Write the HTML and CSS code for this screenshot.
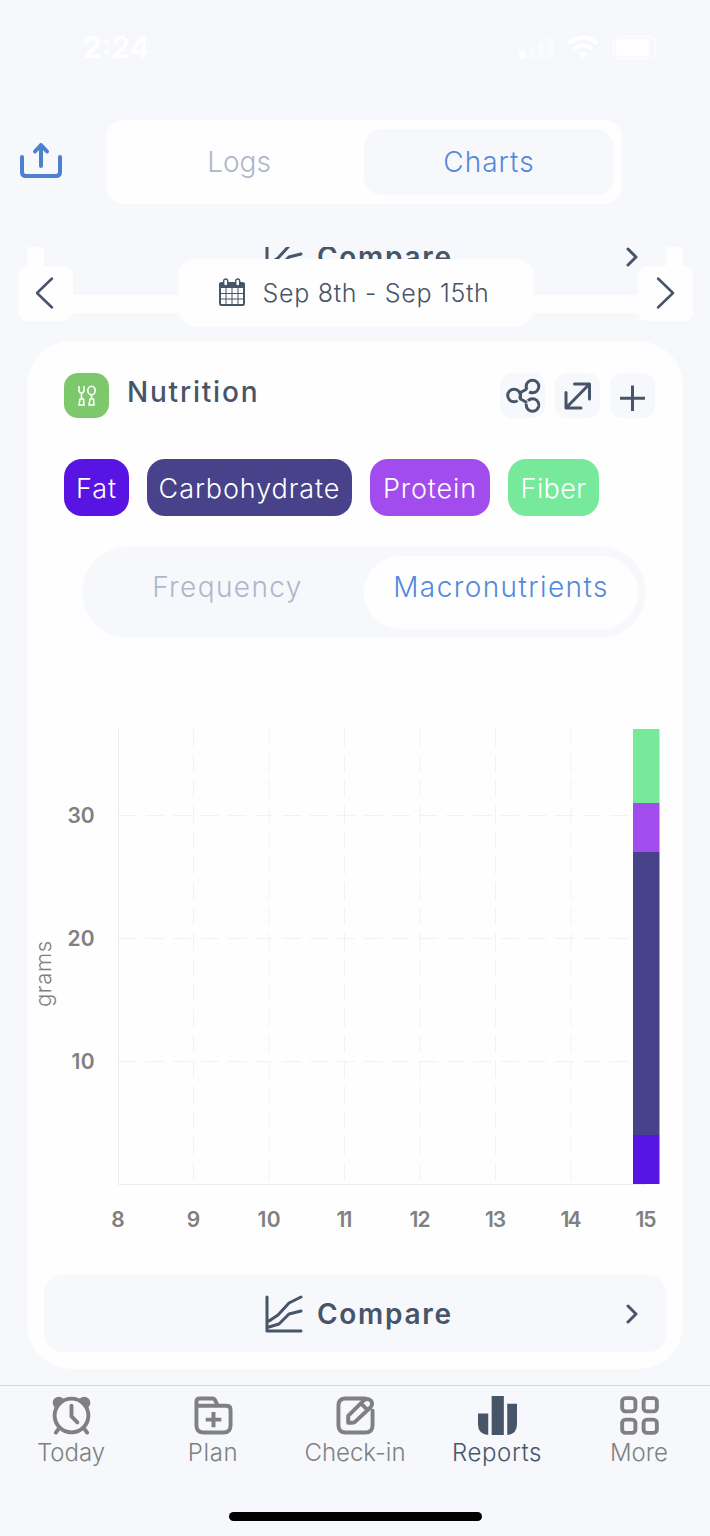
FILE: index.html
```html
<!DOCTYPE html>
<html lang="en">
  <head>
    <meta charset="UTF-8" />
    <meta name="viewport" content="width=device-width, initial-scale=1.0" />
    <title>Reports</title>
    <link rel="stylesheet" href="styles.css">
  </head>

  <body>
    <div class="status-bar">
      <span class="time">2:24</span>
      <svg class="status-icons" width="144" height="26" viewBox="0 0 144 26">
        <rect x="1" y="17" width="6" height="8" rx="2" fill="#fff" />
        <g fill="#fafbfe">
          <rect x="11" y="13" width="6" height="12" rx="2" />
          <rect x="20" y="8" width="6" height="17" rx="2" />
          <rect x="30" y="3" width="6" height="22" rx="2" />
        </g>
        <g fill="none" stroke="#fff" stroke-width="4">
          <path d="M51 9.500Q65 -2.500 79 9.500" />
          <path d="M56 15Q65 7.500 74 15" />
        </g>
        <path d="M60.500 19.500Q65 16 69.500 19.500L65 24.500Z" fill="#fff" />
        <rect x="95.500" y="2.500" width="42" height="22" rx="7" fill="none" stroke="#fbfcfe" stroke-width="2" />
        <rect x="98" y="5" width="33" height="17" rx="4" fill="#fff" />
        <path d="M140 9.500q3 4 0 8z" fill="#fbfcfe" />
      </svg>
    </div>

    <div class="top-bar">
      <svg class="share" width="44" height="38" viewBox="0 0 44 38">
        <path d="M3 16V31Q3 35 7 35H37Q41 35 41 31V16M22 25V4M16 10.500L22 4L28 10.500" />
      </svg>
      <div class="switch">
        <div class="option logs">Logs</div>
        <div class="option charts active">Charts</div>
      </div>
    </div>

    <div class="content">
      <!-- end of the previous card -->
      <div class="card previous">
        <div class="compare">
          <svg width="38" height="38" viewBox="0 0 38 38">
            <path d="M2 2V36H36M4 26L13 20L24 8L36 2M4 32L14 29L24 19L36 16" />
          </svg>
          <span>Compare</span>
          <svg class="chevron" width="14" height="20" viewBox="0 0 14 20">
            <path d="M3 2L11 10L3 18" />
          </svg>
        </div>
      </div>

      <!-- date picker floats over the cards -->
      <div class="date-nav">
        <div class="arrow back">
          <svg width="20" height="34" viewBox="0 0 20 34">
            <path d="M18 2.500L3 17L18 31.500" />
          </svg>
        </div>
        <div class="range">
          <svg width="28" height="30" viewBox="0 0 28 30">
            <rect x="2" y="5" width="24" height="22" rx="1.500" fill="none" stroke="#475569" stroke-width="2" />
            <path d="M1 5H27V10H1Z" fill="#475569" />
            <path d="M8 10V27M14 10V27M20 10V27M2 15.500H26M2 21H26" stroke="#475569" stroke-width="1" />
            <rect x="5.700" y="1" width="4" height="7" rx="2" fill="#fefefe" stroke="#475569" stroke-width="1.400" />
            <rect x="17.700" y="1" width="4" height="7" rx="2" fill="#fefefe" stroke="#475569" stroke-width="1.400" />
          </svg>
          <span>Sep 8th - Sep 15th</span>
        </div>
        <div class="arrow">
          <svg width="20" height="34" viewBox="0 0 20 34">
            <path d="M2 2.500L17 17L2 31.500" />
          </svg>
        </div>
      </div>

      <div class="card nutrition">
        <div class="card-header">
          <div class="badge">
            <svg width="18" height="22" viewBox="0 0 18 22">
              <path d="M1 1V5Q1 8 3.500 8Q6 8 6 5V1M3.500 8V14M2 14H5.500L6 20H1ZM13.500 10V14M12 14H15.500L16 20H11Z" />
              <ellipse cx="13.500" cy="5.500" rx="3.700" ry="4.300" />
            </svg>
          </div>
          <h2>Nutrition</h2>
          <div class="actions">
            <div class="action">
              <svg width="45" height="45" viewBox="0 0 45 45">
                <circle cx="14" cy="22.500" r="6.300" pathLength="100" stroke-dasharray="9 6 85 0" />
                <circle cx="32.500" cy="13.500" r="6.300" pathLength="100" stroke-dasharray="34 8 58 0" />
                <circle cx="32.500" cy="32" r="6.300" pathLength="100" stroke-dasharray="54 8 38 0" />
                <path d="M20.500 19V26M20.500 19.500L26 16.500M20.500 26L26 29" />
              </svg>
            </div>
            <div class="action">
              <svg width="45" height="45" viewBox="0 0 45 45">
                <path d="M19.500 11H34.500V26M11 19.500V35H26M11.500 34.500L34 11.500" />
              </svg>
            </div>
            <div class="action">
              <svg width="45" height="45" viewBox="0 0 45 45">
                <path d="M22.500 14V36.500M11.500 25.200H33.500" stroke-linecap="square" />
              </svg>
            </div>
          </div>
        </div>

        <div class="chips">
          <div class="chip fat">Fat</div>
          <div class="chip carbs">Carbohydrate</div>
          <div class="chip protein">Protein</div>
          <div class="chip fiber">Fiber</div>
        </div>

        <div class="toggle">
          <div class="choice frequency">Frequency</div>
          <div class="choice macros active">Macronutrients</div>
        </div>

        <svg class="chart" width="656" height="637" viewBox="27 638 656 637">
          <g class="grid">
            <path d="M193.500 729V1184M269 729V1184M344.500 729V1184M420 729V1184M495.500 729V1184M571 729V1184" stroke-dasharray="17.500 8" />
            <path d="M118.500 815.500H646M118.500 938.500H646M118.500 1061.500H646" stroke-dasharray="18.500 8.800" />
            <path class="axis" d="M118.500 729V1184.500H646" />
          </g>
          <!-- stacked bar for the 15th -->
          <rect x="633" y="729" width="26.500" height="74" fill="#76e99b" />
          <rect x="633" y="803" width="26.500" height="49" fill="#a24cee" />
          <rect x="633" y="852" width="26.500" height="283" fill="#48428a" />
          <rect x="633" y="1135" width="26.500" height="49" fill="#5814e2" />
          <g class="labels y">
            <text x="94.500" y="823" textLength="27">30</text>
            <text x="94.500" y="946" textLength="27">20</text>
            <text x="94.500" y="1069" textLength="23">10</text>
          </g>
          <g class="labels x">
            <text x="118" y="1226.500">8</text>
            <text x="193.500" y="1226.500">9</text>
            <text x="269" y="1226.500" textLength="23">10</text>
            <text x="344.500" y="1226.500" textLength="16">11</text>
            <text x="420" y="1226.500" textLength="21">12</text>
            <text x="495.500" y="1226.500" textLength="21">13</text>
            <text x="571" y="1226.500" textLength="21">14</text>
            <text x="646" y="1226.500" textLength="21">15</text>
          </g>
          <text class="unit" transform="translate(51 1007) rotate(-90)" textLength="66">grams</text>
        </svg>

        <div class="compare">
          <svg width="38" height="38" viewBox="0 0 38 38">
            <path d="M2 2V36H36M4 26L13 20L24 8L36 2M4 32L14 29L24 19L36 16" />
          </svg>
          <span>Compare</span>
          <svg class="chevron" width="14" height="20" viewBox="0 0 14 20">
            <path d="M3 2L11 10L3 18" />
          </svg>
        </div>
      </div>
    </div>

    <div class="tab-bar">
      <div class="tab today">
        <svg width="39" height="39" viewBox="0 0 40 40">
          <circle cx="7" cy="7" r="6.300" fill="#808080" stroke="none" />
          <circle cx="33" cy="7" r="6.300" fill="#808080" stroke="none" />
          <path d="M8 32L4 37.500M32 32L36 37.500" />
          <circle cx="20" cy="20" r="17.300" fill="#f7f8fc" />
          <path d="M20 10V21L26 27" />
        </svg>
        <span>Today</span>
      </div>
      <div class="tab plan">
        <svg width="39" height="39" viewBox="0 0 40 40">
          <path d="M2.500 10V6Q2.500 2.500 6 2.500H19Q21 2.500 22 5L24.500 10H33Q37.500 10 37.500 14V30Q37.500 37.500 30 37.500H10Q2.500 37.500 2.500 30V10H25M20 16.500V32M12 24.200H28" stroke-linecap="butt" />
        </svg>
        <span>Plan</span>
      </div>
      <div class="tab checkin">
        <svg width="39" height="39" viewBox="0 0 40 40">
          <path d="M30 2.500H10Q2.500 2.500 2.500 10V30Q2.500 37.500 10 37.500H30Q37.500 37.500 37.500 30V15" />
          <path d="M12.500 27.500V20.500L28.500 4.500Q32 1.500 35.500 4.500Q38.500 8 35.500 11.500L19.500 26.500Q18 27.500 16 27.500ZM25.500 7.500L32.500 14.500" />
        </svg>
        <span>Check-in</span>
      </div>
      <div class="tab reports">
        <svg width="39" height="39" viewBox="0 0 40 40">
          <path d="M0 18H10.500V40Q0 39 0 29ZM14 0H26.500V40H14ZM30 8H40V29Q40 39 30 40Z" fill="#475569" stroke="none" />
        </svg>
        <span>Reports</span>
      </div>
      <div class="tab more">
        <svg width="39" height="39" viewBox="0 0 40 40">
          <rect x="2.200" y="2.200" width="13.600" height="13.600" rx="3.500" />
          <rect x="24.200" y="2.200" width="13.600" height="13.600" rx="3.500" />
          <rect x="2.200" y="24.200" width="13.600" height="13.600" rx="3.500" />
          <rect x="24.200" y="24.200" width="13.600" height="13.600" rx="3.500" />
        </svg>
        <span>More</span>
      </div>
    </div>
    <div class="home-indicator"></div>
  </body>
</html>
```
FILE: styles.css
```css
* {
  box-sizing: border-box;
}

body {
  margin: 0;
  width: 710px;
  height: 1536px;
  overflow: hidden;
  background-color: #f7f8fc;
  color: #475569;
  font-family: Inter, "Open Sans", sans-serif;
  font-weight: 300;
  display: flex;
  flex-direction: column;
}

svg {
  display: block;
  flex: none;
}

span,
.option,
.chip,
.choice {
  white-space: nowrap;
}

/* status bar */
.status-bar {
  height: 120px;
  padding: 34px 48px 0 83px;
  display: flex;
  justify-content: space-between;
  align-items: flex-start;
  color: #fff;
}

.time {
  font-size: 30px;
  line-height: 26px;
  font-weight: 600;
}

/* logs / charts */
.top-bar {
  height: 127px;
  display: flex;
  align-items: flex-start;
  padding-left: 19px;
}

.share {
  margin-top: 21px;
  fill: none;
  stroke: #4c80d0;
  stroke-width: 4;
  stroke-linecap: round;
  stroke-linejoin: round;
}

.switch {
  margin-left: 43px;
  width: 516px;
  height: 84px;
  padding: 9px 8px;
  border-radius: 18px;
  background-color: #fefefe;
  display: flex;
}

.option {
  width: 250px;
  text-align: center;
  font-size: 28px;
  line-height: 67px;
  color: #aeb7ca;
}

.option.active {
  border-radius: 18px;
  background-color: #f7f8fc;
  color: #5589dc;
  letter-spacing: 1px;
}

/* scrolling cards */
.content {
  position: relative;
  height: 1138px;
  overflow: hidden;
  padding: 0 27px;
}

.card {
  width: 656px;
  background-color: #fefefe;
  border-radius: 45px;
}

.previous {
  height: 66px;
  padding: 0 17px 18px;
  display: flex;
  align-items: flex-end;
  overflow: hidden;
  border-radius: 0 0 45px 45px;
}

.nutrition {
  height: 1028px;
  margin-top: 28px;
  padding-top: 32px;
}

.date-nav {
  position: absolute;
  top: 12px;
  left: 18px;
  right: 17px;
  height: 68px;
  display: flex;
  justify-content: space-between;
  align-items: center;
}

.arrow {
  width: 55px;
  height: 55px;
  border-radius: 9px;
  background-color: #fefefe;
  display: flex;
  justify-content: center;
  align-items: center;
}

.back {
  padding-right: 4px;
}

.arrow svg,
.compare svg,
.action svg {
  fill: none;
  stroke: #475569;
  stroke-width: 2.5;
  stroke-linecap: round;
  stroke-linejoin: round;
}

.range {
  width: 356px;
  height: 68px;
  padding-left: 40px;
  border-radius: 18px;
  background-color: #fefefe;
  display: flex;
  align-items: center;
  gap: 17px;
  font-size: 25px;
  letter-spacing: 0.7px;
}

.card-header {
  height: 45px;
  padding: 0 28px 0 37px;
  display: flex;
}

.badge {
  width: 45px;
  height: 45px;
  border-radius: 14px;
  background-color: #7ec86c;
  display: flex;
  justify-content: center;
  align-items: center;
}

.badge svg {
  fill: none;
  stroke: #fff;
  stroke-width: 1.6;
}

h2 {
  margin: 0 0 0 18px;
  font-size: 28px;
  line-height: 38px;
  font-weight: 550;
  letter-spacing: 1.8px;
}

.actions {
  margin-left: auto;
  display: flex;
  gap: 10px;
}

.action {
  width: 45px;
  height: 45px;
  border-radius: 12px;
  background-color: #f7f8fc;
}

.action svg {
  stroke-width: 3;
}

.action circle {
  stroke-linecap: butt;
}

.chips {
  margin: 41px 0 0 37px;
  display: flex;
  gap: 18px;
}

.chip {
  height: 57px;
  border-radius: 18px;
  text-align: center;
  font-size: 27px;
  line-height: 60px;
  letter-spacing: 0.9px;
  color: #fff;
}

.fat {
  width: 65px;
  background-color: #5814e2;
}

.carbs {
  width: 205px;
  background-color: #48428a;
}

.protein {
  width: 120px;
  background-color: #a24cee;
}

.fiber {
  width: 91px;
  letter-spacing: 0.4px;
  background-color: #76e99b;
}

/* frequency / macronutrients */
.toggle {
  width: 564px;
  height: 91px;
  margin: 31px 0 0 55px;
  padding: 9px 8px;
  border-radius: 46px;
  background-color: #f7f8fc;
  display: flex;
}

.choice {
  width: 274px;
  padding-left: 1px;
  text-align: center;
  font-size: 28px;
  line-height: 63px;
  letter-spacing: 1.4px;
  color: #aeb7ca;
}

.choice.active {
  padding-left: 0;
  border-radius: 37px;
  background-color: #fefefe;
  color: #5589dc;
}

/* chart */
.grid path {
  fill: none;
  stroke: #f2f2f2;
  stroke-width: 1;
}

.grid .axis {
  stroke: #ededed;
}

.labels {
  font-size: 21px;
  font-weight: 600;
  fill: #808080;
}

.y {
  text-anchor: end;
}

.x {
  text-anchor: middle;
}

.unit {
  font-size: 22px;
  fill: #808080;
}

.compare {
  flex: none;
  width: 622px;
  height: 77px;
  padding: 0 27px 0 221px;
  border-radius: 18px;
  background-color: #f7f8fc;
  display: flex;
  align-items: center;
  font-size: 28px;
  font-weight: 600;
  letter-spacing: 1.7px;
}

.nutrition .compare {
  margin-left: 17px;
}

.compare span {
  margin-left: 14px;
}

.compare svg {
  stroke-width: 3;
}

.compare .chevron {
  margin-left: auto;
}

/* bottom tabs */
.tab-bar {
  height: 127px;
  padding-top: 10px;
  border-top: 1px solid #d4d6da;
  display: flex;
}

.tab {
  flex: 1;
  display: flex;
  flex-direction: column;
  align-items: center;
  gap: 3px;
  font-size: 24px;
  line-height: 30px;
  color: #808080;
}

.tab svg {
  fill: none;
  stroke: #808080;
  stroke-width: 4;
  stroke-linecap: round;
  stroke-linejoin: round;
}

.plan,
.reports {
  letter-spacing: 0.6px;
}

.reports {
  color: #475569;
}

.home-indicator {
  width: 253px;
  height: 9px;
  margin: 0 auto;
  border-radius: 5px;
  background-color: #000;
}
```
